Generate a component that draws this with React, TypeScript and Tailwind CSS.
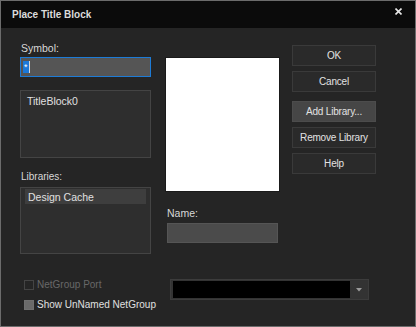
// Place Title Block dialog, dark theme
const font = { fontFamily: '"Liberation Sans", Arial, sans-serif' }

function Btn({ label, active }: { label: string; active?: boolean }) {
  return (
    <div
      className={
        'w-[84px] h-[21px] flex items-center justify-center text-[10px] tracking-[-0.2px] text-[#e2e2e2] border ' +
        (active ? 'bg-[#464646] border-[#4c4c4c]' : 'bg-[#2a2a2a] border-[#3a3a3a]')
      }
    >
      {label}
    </div>
  )
}

export default function App() {
  return (
    <div
      style={font}
      className="w-[416px] h-[327px] border border-[#6c6c6c] bg-[#252525] flex flex-col text-[10.5px] leading-[14px] text-[#e0e0e0] select-none"
    >
      <div className="h-[27px] shrink-0 bg-[#0b0b0b] flex items-center justify-between pl-[11px] pr-[13px]">
        <span className="font-bold text-[10px] text-[#dcdcdc]">Place Title Block</span>
        <svg width="7" height="7" viewBox="0 0 7 7" className="-mt-[6px]">
          <path d="M0.5 0.5 L6.5 6.5 M6.5 0.5 L0.5 6.5" stroke="#e8e8e8" strokeWidth="1.6" />
        </svg>
      </div>

      <div className="flex pl-[19px] pt-[13px]">
        {/* left column */}
        <div className="w-[131px] shrink-0 flex flex-col">
          <div className="pl-[1px] text-[#d8d8d8]">Symbol:</div>
          <div className="mt-[2px] h-[20px] border border-[#1d7bd6] bg-[#555555] flex items-center pl-[2px]">
            <span className="bg-[#1b78d8] text-white text-[9px] leading-[12px] px-[1px] h-[12px]">*</span>
            <span className="w-[1px] h-[12px] bg-[#d8d8d8]" />
          </div>
          <div className="mt-[13px] h-[68px] border border-[#444444] bg-[#2e2e2e] pl-[6px] pt-[3px]">
            TitleBlock0
          </div>
          <div className="mt-[12px] pl-[1px] text-[10px] text-[#d8d8d8]">Libraries:</div>
          <div className="mt-[3px] h-[67px] border border-[#444444] bg-[#2e2e2e] p-[4px] pt-[1px]">
            <div className="bg-[#3e3e3e] h-[15px] pl-[3px] flex items-center">Design Cache</div>
          </div>
          <div className="mt-[24px] flex items-center h-[14px] pl-[4px] text-[10px]">
            <span className="w-[10px] h-[10px] shrink-0 border border-[#444444]" />
            <span className="ml-[3px] text-[#686868] whitespace-nowrap">NetGroup Port</span>
          </div>
          <div className="mt-[6px] flex items-center h-[14px] pl-[4px] text-[10px]">
            <span className="w-[10px] h-[10px] shrink-0 bg-[#6a6a6a] border border-[#707070]" />
            <span className="ml-[3px] text-[#e0e0e0] whitespace-nowrap">Show UnNamed NetGroup</span>
          </div>
        </div>

        {/* right area */}
        <div className="ml-[14px] flex flex-col">
          <div className="flex">
            <div className="flex flex-col mt-[16px]">
              <div className="w-[115px] h-[135px] bg-white border border-[#1a1a1a]" />
              <div className="mt-[14px] pl-[2px] text-[#d8d8d8]">Name:</div>
              <div className="mt-[3px] ml-[2px] w-[111px] h-[20px] bg-[#4b4b4b] border border-[#555555]" />
            </div>
            <div className="ml-[12px] mt-[4px] flex flex-col gap-[5px]">
              <Btn label="OK" />
              <Btn label="Cancel" />
              <div className="mt-[4px]">
                <Btn label="Add Library..." active />
              </div>
              <Btn label="Remove Library" />
              <Btn label="Help" />
            </div>
          </div>
          <div className="mt-[36px] ml-[5px] w-[199px] h-[21px] border border-[#3c3c3c] bg-[#333333] flex pl-[2px] py-[1px]">
            <div className="flex-1 bg-black" />
            <div className="w-[18px] flex items-center justify-center">
              <svg width="6" height="4" viewBox="0 0 6 4">
                <path d="M0 0 H6 L3 3.5 Z" fill="#9a9a9a" />
              </svg>
            </div>
          </div>
        </div>
      </div>
    </div>
  )
}
